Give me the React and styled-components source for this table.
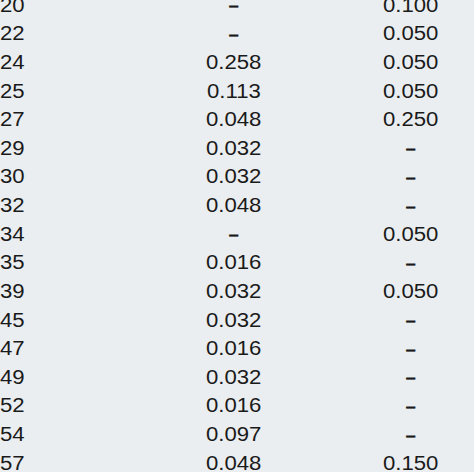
import React from 'react';
import styled, {createGlobalStyle} from 'styled-components';

const Global = createGlobalStyle`
  html, body {
    margin: 0;
    padding: 0;
    background: #ffffff;
  }
`;

const Sheet = styled.div`
  width: 474px;
  height: 472px;
  overflow: hidden;
  background: #ebeef0;
  color: #1a1a1a;
  font-family: "Liberation Sans", Arial, sans-serif;
  font-size: 20.5px;
`;

const Rows = styled.div`
  margin-top: -9.3px;
`;

const Row = styled.div`
  display: grid;
  grid-template-columns: 120px 227px 1fr;
  height: 28.625px;
  line-height: 28.625px;
`;

const Cell = styled.div`
  text-align: ${p => (p.left ? 'left' : 'center')};
`;

const Txt = styled.span`
  display: inline-block;
  transform: scaleX(1.08);
  transform-origin: ${p => (p.left ? 'left' : 'center')} center;
`;

const Dash = styled.span`
  display: inline-block;
  transform: scaleX(0.72);
  -webkit-text-stroke: 0.6px #1a1a1a;
  position: relative;
  top: 0.5px;
`;

const data = [
  ['20', null, '0.100'],
  ['22', null, '0.050'],
  ['24', '0.258', '0.050'],
  ['25', '0.113', '0.050'],
  ['27', '0.048', '0.250'],
  ['29', '0.032', null],
  ['30', '0.032', null],
  ['32', '0.048', null],
  ['34', null, '0.050'],
  ['35', '0.016', null],
  ['39', '0.032', '0.050'],
  ['45', '0.032', null],
  ['47', '0.016', null],
  ['49', '0.032', null],
  ['52', '0.016', null],
  ['54', '0.097', null],
  ['57', '0.048', '0.150'],
];

const Value = ({v}) => (
  <Cell>
    <Txt>{v == null ? <Dash>–</Dash> : v}</Txt>
  </Cell>
);

export default function App() {
  return (
    <Sheet>
      <Global />
      <Rows>
        {data.map(([n, a, b]) => (
          <Row key={n}>
            <Cell left>
              <Txt left>{n}</Txt>
            </Cell>
            <Value v={a} />
            <Value v={b} />
          </Row>
        ))}
      </Rows>
    </Sheet>
  );
}
